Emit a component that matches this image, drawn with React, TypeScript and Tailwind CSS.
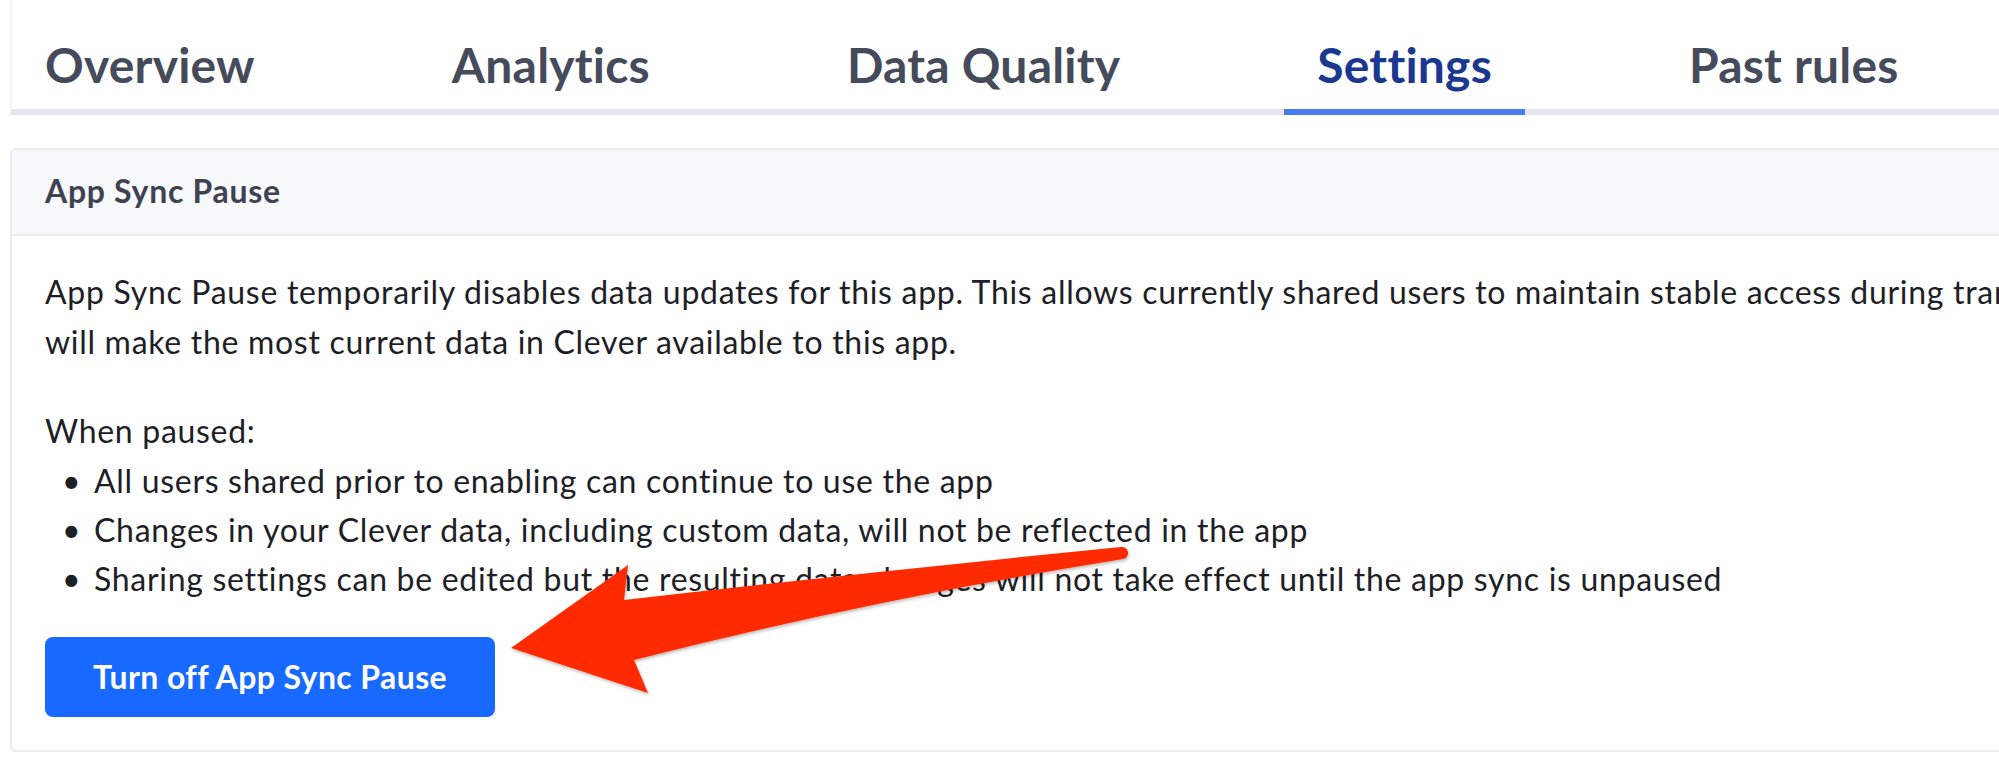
import React from "react";

const tabs = ["Overview", "Analytics", "Data Quality", "Settings", "Past rules"];

const bullets = [
  "All users shared prior to enabling can continue to use the app",
  "Changes in your Clever data, including custom data, will not be reflected in the app",
  "Sharing settings can be edited but the resulting data changes will not take effect until the app sync is unpaused",
];

const App: React.FC = () => {
  const active = "Settings";

  return (
    <div
      className="relative w-full h-[782px] overflow-hidden bg-white"
      style={{ fontFamily: "Lato, 'Noto Sans', sans-serif" }}
    >
      {/* Tabs */}
      <div className="ml-[10px] flex gap-[131px] border-l-2 border-[#f4f4f6] border-b-[6px] border-b-[#e5e6eb]">
        {tabs.map((t) => (
          <div
            key={t}
            className={`-mb-[6px] px-[33px] pt-[41px] pb-[20px] text-[48px] leading-[48px] tracking-[0.2px] font-bold whitespace-nowrap border-b-[6px] ${
              t === active
                ? "text-[#1b3890] border-[#4a7bf3]"
                : "text-[#464b5b] border-transparent"
            }`}
          >
            {t}
          </div>
        ))}
      </div>

      {/* Card */}
      <div className="mt-[33px] ml-[10px] w-[2600px] rounded-[6px] border-2 border-[#ebecf0]">
        <div className="bg-[#f8f9fb] border-b-2 border-[#ebecf0] rounded-t-[6px] px-[33px] pt-[25px] pb-[27px]">
          <h2 className="text-[32px] leading-[32px] tracking-[0.7px] font-bold text-[#3e4252]">App Sync Pause</h2>
        </div>

        <div className="px-[33px] pt-[31px] pb-[33px] text-[32px] leading-[50px] tracking-[0.7px] text-[#1d1e26]">
          <p className="whitespace-nowrap">
            App Sync Pause temporarily disables data updates for this app. This allows currently shared users to
            maintain stable access during transitions. Turning off App Sync Pause
            <br />
            will make the most current data in Clever available to this app.
          </p>

          <p className="mt-[39px]">When paused:</p>
          <ul className="leading-[49px]">
            {bullets.map((b) => (
              <li key={b} className="flex whitespace-nowrap">
                <span className="w-[49px] pl-[17px]">•</span>
                <span>{b}</span>
              </li>
            ))}
          </ul>

          <button className="mt-[34px] w-[450px] h-[80px] rounded-[8px] bg-[#1769ff] text-white text-[32px] tracking-[0.4px] font-bold">
            Turn off App Sync Pause
          </button>
        </div>
      </div>

      {/* Annotation arrow */}
      <svg className="absolute left-0 top-0 pointer-events-none" width="1999" height="782">
        <defs>
          <filter id="arrowShadow" x="-10%" y="-20%" width="120%" height="140%">
            <feDropShadow dx="1" dy="2" stdDeviation="1.5" floodColor="#000" floodOpacity="0.25" />
          </filter>
        </defs>
        <path
          d="M511 648 L628 565 L624 600 Q870 572 1121 547 A6 6 0 0 1 1123 559 Q870 600 634 660 L648 693 Z"
          fill="#ff2a00"
          filter="url(#arrowShadow)"
        />
      </svg>
    </div>
  );
};

export default App;
